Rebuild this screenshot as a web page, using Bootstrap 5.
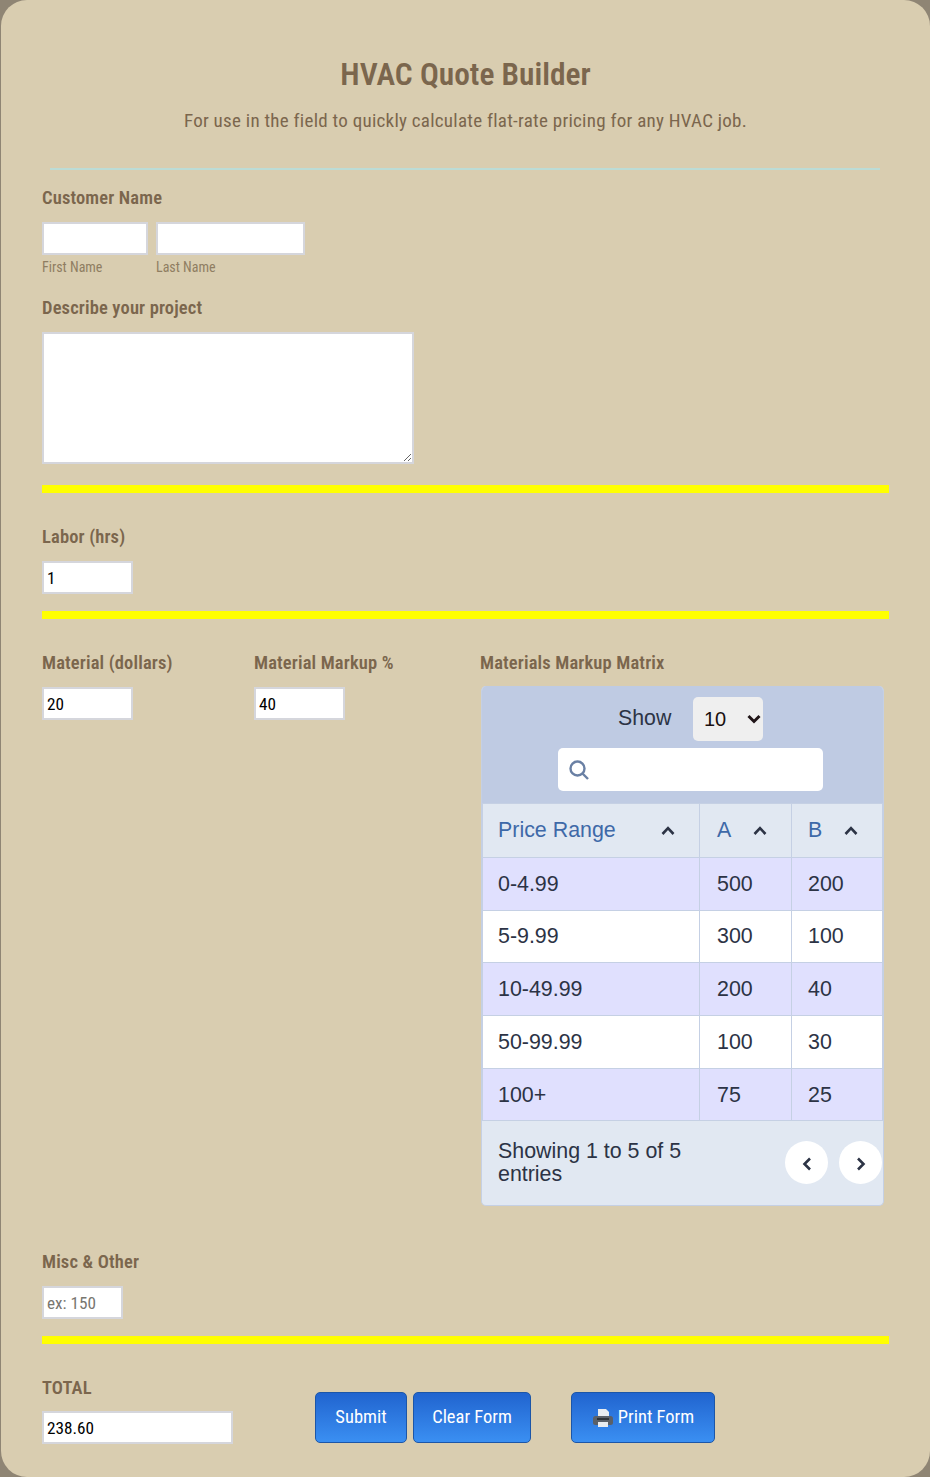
<!DOCTYPE html>
<html lang="en"><head><meta charset="utf-8"><title>HVAC Quote Builder</title>
<link href="https://cdn.jsdelivr.net/npm/bootstrap@5.3.0/dist/css/bootstrap.min.css" rel="stylesheet">
<style>
html,body{height:100%}
body{background:#8f8574;margin:0;overflow:hidden}
.sheet{background:#d9cdb0;height:1477px;border-radius:26px;margin-left:1px;padding:0 41px;color:#7b664d;font-family:"Roboto Condensed","Liberation Sans",sans-serif}
.sheet-title{font-size:31.4px;font-weight:600;line-height:38px;text-align:center;margin:0;padding-top:56px;height:93px}
.sheet-sub{font-size:19px;letter-spacing:.26px;line-height:24px;text-align:center;margin:0;padding-top:16px;height:75px;box-sizing:border-box}
.rule-blue{height:2px;background:#bcdcd6;margin-left:8px;width:830px}
.lbl{display:block;font-size:18.5px;font-weight:600;letter-spacing:.15px;line-height:24px;margin:0}
.sublbl{display:block;font-size:14px;line-height:18px;color:#8f7d62;margin-top:3px}
.fld{display:block;height:33px;margin-top:12px;border:2px solid #d5d6dc;background:#fff;padding:0 3px;font-family:"Roboto Condensed",sans-serif;font-size:17.2px;line-height:29px;color:#000;border-radius:0;outline:0}
.fld::placeholder{color:#78766f;opacity:1}
.fld-tight{margin-top:11px}
.area{display:block;width:372px;height:132px;margin-top:12px;border:2px solid #d5d6dc;background:#fff;border-radius:0}
.bar-y{height:8px;background:#ff0;width:847px}
.w-first{width:106px}.w-last{width:149px}.w-num{width:91px}.w-misc{width:81px}.w-total{width:191px}
.cell-a{width:212px}.cell-b{width:226px}
.matrix{width:403px;height:520px;margin-top:11px;margin-left:1px;background:#e1e8f2;border-radius:5px;border:solid #c5d0e4;border-width:0 1px 1px 1px;font-family:"Liberation Sans",Arial,sans-serif;overflow:hidden;color:#2c3345}
.matrix-top{height:117px;background:#bfcbe3;padding:11px 0 0 16px}
.show-txt{width:54px;margin-right:21px;font-size:21.3px}
.sel{width:70px;height:44px;appearance:none;background:#efefef url("data:image/svg+xml,%3Csvg xmlns='http://www.w3.org/2000/svg' width='14' height='10' viewBox='0 0 14 10' fill='none' stroke='%23201518' stroke-width='3'%3E%3Cpath d='M1.5 2L7 7.5L12.5 2'/%3E%3C/svg%3E") no-repeat right 2px center;border:0;border-radius:5px;padding:0 0 0 11px;font-size:20px;color:#1a1010;outline:0}
.srch{width:265px;height:43px;background:#fff;border-radius:5px;margin:7px auto 0;padding-left:10px}
.matrix table{margin:0;width:400px;table-layout:fixed;border-collapse:collapse}
.matrix th,.matrix td{border:1px solid #c5d0e4;padding:0 0 0 16px;font-weight:400;height:52.7px;vertical-align:middle;font-size:21.4px;color:#2c3345;box-shadow:none}
.matrix th:first-child,.matrix td:first-child{padding-left:15px}
.matrix th:nth-child(2),.matrix td:nth-child(2){padding-left:17px}
.matrix th{background:#e1e8f2;color:#3e69a8;height:54px}
.row-tint td{background:#e0e0fe}
.row-white td{background:#fff}
.sort-ic{width:14px;height:9px}
.matrix-foot{height:83px;padding:19px 1px 0 16px;line-height:23px;font-size:21.4px}
.foot-txt{width:210px}
.page-dot{width:43px;height:43px;border-radius:50%;background:#fff;border:0;padding:0}
.btn-blue{height:51px;background:linear-gradient(#2164cf,#3a8ff2);border:1px solid #1c56a8;border-radius:5px;color:#fff;font-size:18.5px;padding:0;font-family:"Roboto Condensed",sans-serif}
.btn-blue:hover{color:#fff;background:linear-gradient(#2164cf,#3a8ff2)}
.b1{width:92px;margin-right:6px}.b2{width:118px;margin-right:40px}.b3{width:144px}
.btn-wrap{padding:16px 0 0 82px}
.name-row{gap:8px}
.pager{gap:11px;margin-top:1px}
.gap-top1{margin-top:21px}.gap-top2{margin-top:32px}.gap-top3{margin-top:44px}.gap-bar{margin-top:17px}.gap-bar2{margin-top:17px}.gap-desc{margin-top:20px}.gap-cust{margin-top:16px}
</style></head><body>
<div class="sheet">
  <h1 class="sheet-title">HVAC Quote Builder</h1>
  <p class="sheet-sub">For use in the field to quickly calculate flat-rate pricing for any HVAC job.</p>
  <div class="rule-blue"></div>
  <label class="lbl gap-cust">Customer Name</label>
  <div class="d-flex name-row">
    <div><input class="fld w-first" aria-label="First Name"><span class="sublbl">First Name</span></div>
    <div><input class="fld w-last" aria-label="Last Name"><span class="sublbl">Last Name</span></div>
  </div>
  <label class="lbl gap-desc">Describe your project</label>
  <textarea class="area" aria-label="Describe your project"></textarea>
  <div class="bar-y gap-top1"></div>
  <label class="lbl gap-top2">Labor (hrs)</label>
  <input class="fld w-num" value="1" aria-label="Labor">
  <div class="bar-y gap-bar"></div>
  <div class="d-flex gap-top2">
    <div class="cell-a"><label class="lbl">Material (dollars)</label><input class="fld w-num" value="20" aria-label="Material"></div>
    <div class="cell-b"><label class="lbl">Material Markup %</label><input class="fld w-num" value="40" aria-label="Markup"></div>
    <div>
      <label class="lbl">Materials Markup Matrix</label>
      <div class="matrix">
        <div class="matrix-top">
          <div class="d-flex justify-content-center align-items-center">
            <span class="show-txt">Show</span>
            <select class="sel" aria-label="Show"><option>10</option></select>
          </div>
          <div class="srch d-flex align-items-center">
            <svg width="22" height="22" viewBox="0 0 22 22" fill="none" stroke="#6a80a4" stroke-width="2.4"><circle cx="9.5" cy="9.5" r="7"/><path d="M14.5 14.5L20 20"/></svg>
          </div>
        </div>
        <table class="table">
          <colgroup><col style="width:217px"><col style="width:92px"><col style="width:91px"></colgroup>
          <thead><tr>
            <th><div class="d-flex justify-content-between align-items-center pe-4">Price Range<svg class="sort-ic" viewBox="0 0 14 9" fill="none" stroke="#2c3345" stroke-width="2.6"><path d="M1.5 8L7 2.2L12.5 8"/></svg></div></th>
            <th><div class="d-flex justify-content-between align-items-center pe-4">A<svg class="sort-ic" viewBox="0 0 14 9" fill="none" stroke="#2c3345" stroke-width="2.6"><path d="M1.5 8L7 2.2L12.5 8"/></svg></div></th>
            <th><div class="d-flex justify-content-between align-items-center pe-4">B<svg class="sort-ic" viewBox="0 0 14 9" fill="none" stroke="#2c3345" stroke-width="2.6"><path d="M1.5 8L7 2.2L12.5 8"/></svg></div></th>
          </tr></thead>
          <tbody>
            <tr class="row-tint"><td>0-4.99</td><td>500</td><td>200</td></tr>
            <tr class="row-white"><td>5-9.99</td><td>300</td><td>100</td></tr>
            <tr class="row-tint"><td>10-49.99</td><td>200</td><td>40</td></tr>
            <tr class="row-white"><td>50-99.99</td><td>100</td><td>30</td></tr>
            <tr class="row-tint"><td>100+</td><td>75</td><td>25</td></tr>
          </tbody>
        </table>
        <div class="matrix-foot d-flex justify-content-between align-items-start">
          <div class="foot-txt">Showing 1 to 5 of 5 entries</div>
          <div class="d-flex pager">
            <button class="page-dot" aria-label="Previous"><svg width="10" height="14" viewBox="0 0 10 14" fill="none" stroke="#2c3345" stroke-width="2.6"><path d="M8 1.5L2.5 7L8 12.5"/></svg></button>
            <button class="page-dot" aria-label="Next"><svg width="10" height="14" viewBox="0 0 10 14" fill="none" stroke="#2c3345" stroke-width="2.6"><path d="M2 1.5L7.5 7L2 12.5"/></svg></button>
          </div>
        </div>
      </div>
    </div>
  </div>
  <label class="lbl gap-top3">Misc &amp; Other</label>
  <input class="fld w-misc" placeholder="ex: 150" aria-label="Misc">
  <div class="bar-y gap-bar2"></div>
  <div class="d-flex gap-top2">
    <div><label class="lbl">TOTAL</label><input class="fld fld-tight w-total" value="238.60" aria-label="Total"></div>
    <div class="btn-wrap flex-shrink-0 d-flex align-items-start">
      <button class="btn btn-blue b1">Submit</button>
      <button class="btn btn-blue b2">Clear Form</button>
      <button class="btn btn-blue b3 d-flex align-items-center justify-content-center gap-1"><svg width="22" height="22" viewBox="0 0 22 22"><path d="M6 2h8l3 3v6H6z" fill="#e8ecf0"/><rect x="1" y="9" width="20" height="9" rx="2.5" fill="#5a6068"/><rect x="5" y="11" width="12" height="2" fill="#2e3338"/><rect x="6" y="15" width="10" height="5" fill="#e8ecf0"/></svg>Print Form</button>
    </div>
  </div>
</div>
</body></html>
